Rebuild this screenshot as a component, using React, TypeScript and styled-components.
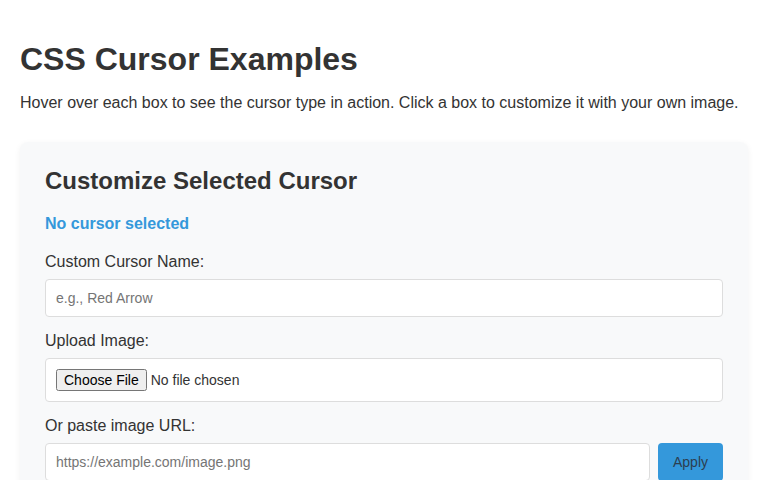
import React, { useState } from 'react';
import { createGlobalStyle, styled } from 'styled-components';

const GlobalStyle = createGlobalStyle`
  html, body {
    margin: 0;
    background: #ffffff;
  }
  body {
    padding: 20px;
    font-family: 'Liberation Sans', Arial, sans-serif;
    color: #333333;
  }
`;

const App: React.FC = (): JSX.Element => {
  const [name, setName] = useState<string>('');
  const [url, setUrl] = useState<string>('');

  return (
    <>
      <GlobalStyle />
      <PageTitle>CSS Cursor Examples</PageTitle>
      <Intro>
        Hover over each box to see the cursor type in action. Click a box to
        customize it with your own image.
      </Intro>
      <EditorCard>
        <CardTitle>Customize Selected Cursor</CardTitle>
        <SelectedInfo>No cursor selected</SelectedInfo>
        <FormGroup>
          <FieldLabel htmlFor="cursor-name">Custom Cursor Name:</FieldLabel>
          <TextInput
            id="cursor-name"
            type="text"
            placeholder="e.g., Red Arrow"
            value={name}
            onChange={(e) => setName(e.target.value)}
          />
        </FormGroup>
        <FormGroup>
          <FieldLabel htmlFor="cursor-file">Upload Image:</FieldLabel>
          <FileInput id="cursor-file" type="file" accept="image/*" />
        </FormGroup>
        <FormGroup>
          <FieldLabel htmlFor="cursor-url">Or paste image URL:</FieldLabel>
          <UrlRow>
            <TextInput
              id="cursor-url"
              type="text"
              placeholder="https://example.com/image.png"
              value={url}
              onChange={(e) => setUrl(e.target.value)}
            />
            <ApplyButton type="button">Apply</ApplyButton>
          </UrlRow>
        </FormGroup>
      </EditorCard>
    </>
  );
};

const PageTitle = styled.h1`
  font-size: 32px;
  font-weight: 700;
  margin: 21px 0 16px;
  color: #333333;
`;

const Intro = styled.p`
  font-size: 16px;
  margin: 0 0 30px;
`;

const EditorCard = styled.section`
  background: #f8f9fa;
  border-radius: 8px;
  padding: 25px;
  box-shadow: 0 2px 6px rgba(0, 0, 0, 0.06);
`;

const CardTitle = styled.h2`
  font-size: 24px;
  font-weight: 700;
  margin: 0 0 20px;
  color: #333333;
`;

const SelectedInfo = styled.div`
  font-size: 16px;
  font-weight: 700;
  color: #3498db;
  margin-bottom: 20px;
`;

const FormGroup = styled.div`
  margin-bottom: 15px;
`;

const FieldLabel = styled.label`
  display: block;
  font-size: 16px;
  margin-bottom: 8px;
`;

const TextInput = styled.input`
  display: block;
  width: 100%;
  box-sizing: border-box;
  padding: 10px;
  font-family: 'Liberation Sans', Arial, sans-serif;
  font-size: 14px;
  color: #333333;
  background: #ffffff;
  border: 1px solid #dddddd;
  border-radius: 4px;
  outline: none;
  &::placeholder {
    color: #757575;
  }
`;

const FileInput = styled(TextInput)`
  padding: 10px;
`;

const UrlRow = styled.div`
  display: flex;
  gap: 8px;
  align-items: stretch;
`;

const ApplyButton = styled.button`
  flex: none;
  padding: 10px 15px;
  font-family: 'Liberation Sans', Arial, sans-serif;
  font-size: 14px;
  color: #2c3e50;
  background: #3498db;
  border: none;
  border-radius: 4px;
  cursor: pointer;
`;

export default App;
